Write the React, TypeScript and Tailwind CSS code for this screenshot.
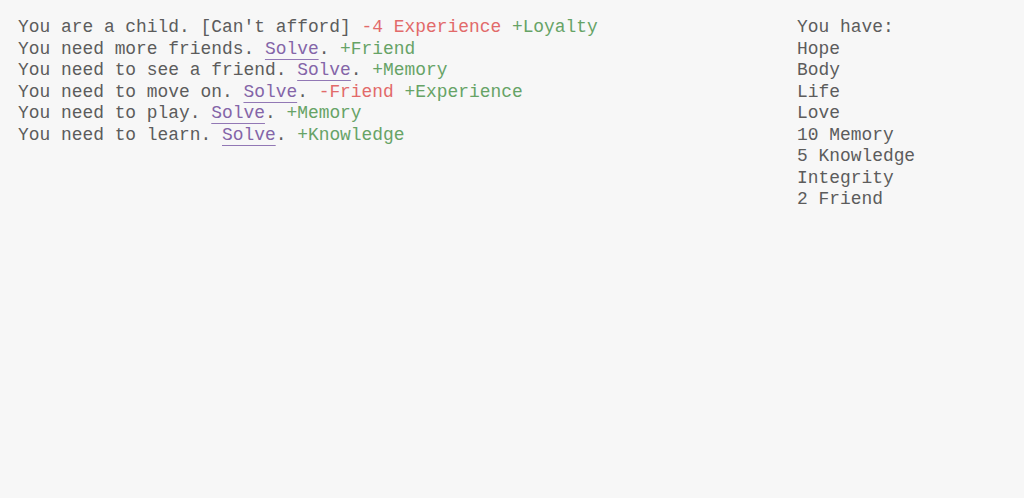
import React from "react";

const G = ({ children }: { children: React.ReactNode }) => <span className="text-[#66a366]">{children}</span>;
const R = ({ children }: { children: React.ReactNode }) => <span className="text-[#e26a6a]">{children}</span>;
const S = () => (
  <span className="text-[#8465a8] underline decoration-[#9278b5] decoration-1 underline-offset-[5px]">Solve</span>
);

export default function App() {
  return (
    <div
      className="w-[1024px] h-[498px] bg-[#f7f7f7] text-[#5c5c5c] text-[17.9px] leading-[21.5px] flex pt-[17px] pl-[18px]"
      style={{ fontFamily: '"Courier New", "Liberation Mono", monospace' }}
    >
      <div className="w-[779px] whitespace-pre">
        <div>You are a child. [Can't afford] <R>-4 Experience</R> <G>+Loyalty</G></div>
        <div>You need more friends. <S />. <G>+Friend</G></div>
        <div>You need to see a friend. <S />. <G>+Memory</G></div>
        <div>You need to move on. <S />. <R>-Friend</R> <G>+Experience</G></div>
        <div>You need to play. <S />. <G>+Memory</G></div>
        <div>You need to learn. <S />. <G>+Knowledge</G></div>
      </div>
      <div className="whitespace-pre">
        <div>You have:</div>
        <div>Hope</div>
        <div>Body</div>
        <div>Life</div>
        <div>Love</div>
        <div>10 Memory</div>
        <div>5 Knowledge</div>
        <div>Integrity</div>
        <div>2 Friend</div>
      </div>
    </div>
  );
}
